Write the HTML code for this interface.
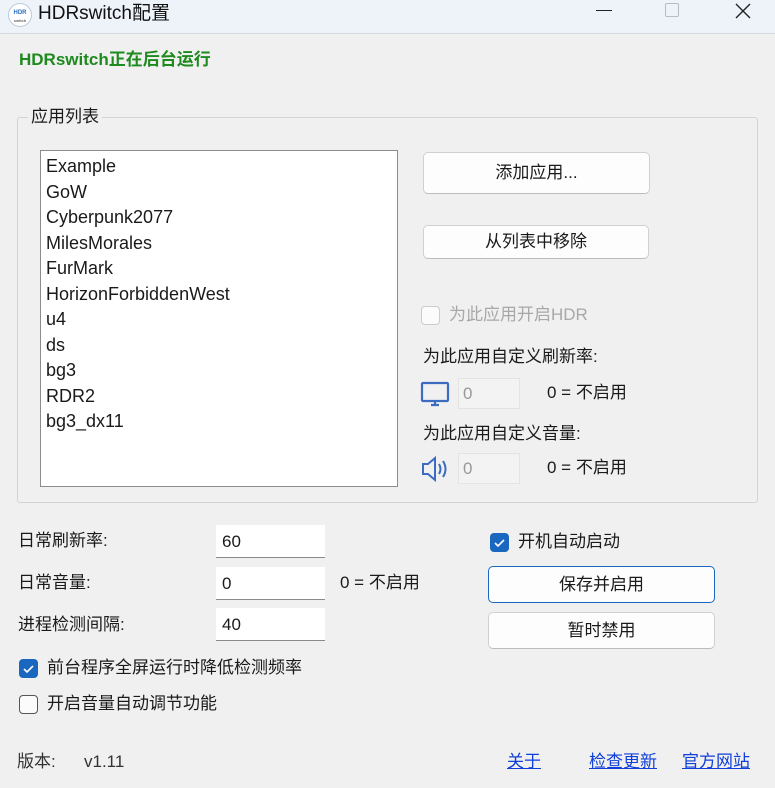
<!DOCTYPE html>
<html><head><meta charset="utf-8"><style>
*{margin:0;padding:0;box-sizing:border-box}
body{width:775px;height:788px;background:#f0f0f0;font-family:"Liberation Sans","Noto Sans CJK SC",sans-serif;color:#1a1a1a;position:relative;overflow:hidden;font-size:17px}
.a{position:absolute;white-space:nowrap;line-height:20px}
.btn{position:absolute;background:#fdfdfd;border:1px solid #d0d0d0;border-bottom-color:#bcbcbc;border-radius:5px;text-align:center;font-size:17px}
.inp{position:absolute;background:#fff;border-bottom:1px solid #8a8a8a;font-size:17px;padding-left:6px}
.cb{position:absolute;width:19px;height:19px;border-radius:4px}
.cb.on{background:#1a67c0}
.cb.off{border:1.5px solid #555;background:#fbfbfb}
.lnk{color:#0f3fd8;text-decoration:underline}
</style></head><body>
<div class="a" style="left:0;top:0;width:775px;height:34px;background:#eef2f9;border-bottom:1px solid #d6d9de"></div>
<div class="a" style="left:8px;top:3px;width:24px;height:24px;border-radius:50%;background:#fff;border:1px solid #bcd;font-size:6px;color:#2a6cc0;text-align:center;line-height:8px;padding-top:5px;font-weight:bold">HDR<br><span style="font-size:4px;color:#666">switch</span></div>
<div class="a" style="left:38px;top:3px;font-size:19px;line-height:22px;color:#111">HDRswitch配置</div>
<div class="a" style="left:596px;top:10px;width:16px;height:1px;background:#222"></div>
<div class="a" style="left:665px;top:3px;width:14px;height:14px;border:1px solid #bbb;border-radius:2px"></div>
<svg class="a" style="left:734px;top:2px" width="18" height="18"><path d="M2 2L16 16M16 2L2 16" stroke="#222" stroke-width="1.4"/></svg>
<div class="a" style="left:19px;top:50px;font-size:17px;font-weight:bold;color:#1e8a1e">HDRswitch正在后台运行</div>
<div class="a" style="left:17px;top:117px;width:741px;height:386px;border:1px solid #d4d4d4;border-radius:3px"></div>
<div class="a" style="left:28px;top:107px;padding:0 3px;background:#f0f0f0;font-size:17px">应用列表</div>
<div class="a" style="left:40px;top:150px;width:358px;height:337px;background:#fff;border:1px solid #8c8c8c;padding:3px 0 0 5px;font-size:18px;line-height:25.5px">
Example<br>GoW<br>Cyberpunk2077<br>MilesMorales<br>FurMark<br>HorizonForbiddenWest<br>u4<br>ds<br>bg3<br>RDR2<br>bg3_dx11</div>
<div class="btn" style="left:423px;top:152px;width:227px;height:42px;line-height:40px">添加应用...</div>
<div class="btn" style="left:423px;top:225px;width:226px;height:34px;line-height:32px">从列表中移除</div>
<div class="cb off" style="left:421px;top:306px;border-color:#ccc"></div>
<div class="a" style="left:449px;top:305px;color:#a8a8a8">为此应用开启HDR</div>
<div class="a" style="left:423px;top:347px">为此应用自定义刷新率:</div>
<svg class="a" style="left:420px;top:381px" width="32" height="28"><rect x="2" y="2" width="26" height="18" rx="1" fill="none" stroke="#3b6cc2" stroke-width="2.2"/><path d="M11 24h8M15 20v4" stroke="#3b6cc2" stroke-width="2.2"/></svg>
<div class="a" style="left:458px;top:378px;width:62px;height:31px;background:#f3f3f3;border:1px solid #e3e3e3;color:#999;padding:5px 0 0 4px">0</div>
<div class="a" style="left:547px;top:383px">0 = 不启用</div>
<div class="a" style="left:423px;top:424px">为此应用自定义音量:</div>
<svg class="a" style="left:420px;top:454px" width="30" height="30"><path d="M3 10h5l7-6v22l-7-6H3z" fill="none" stroke="#3b6cc2" stroke-width="2"/><path d="M19 10q3 5 0 10M23 7q5 8 0 16" fill="none" stroke="#3b6cc2" stroke-width="2"/></svg>
<div class="a" style="left:458px;top:453px;width:62px;height:31px;background:#f3f3f3;border:1px solid #e3e3e3;color:#999;padding:5px 0 0 4px">0</div>
<div class="a" style="left:547px;top:458px">0 = 不启用</div>
<div class="a" style="left:18px;top:531px">日常刷新率:</div>
<div class="a" style="left:18px;top:573px">日常音量:</div>
<div class="a" style="left:18px;top:615px">进程检测间隔:</div>
<div class="inp" style="left:216px;top:525px;width:109px;height:33px;line-height:33px">60</div>
<div class="inp" style="left:216px;top:567px;width:109px;height:33px;line-height:33px">0</div>
<div class="inp" style="left:216px;top:608px;width:109px;height:33px;line-height:33px">40</div>
<div class="a" style="left:340px;top:573px">0 = 不启用</div>
<div class="cb on" style="left:490px;top:533px"><svg width="19" height="19"><path d="M5 10l3 3 6-6" fill="none" stroke="#fff" stroke-width="1.6"/></svg></div>
<div class="a" style="left:518px;top:532px">开机自动启动</div>
<div class="btn" style="left:488px;top:566px;width:227px;height:37px;line-height:35px;border:1.5px solid #1a67c0">保存并启用</div>
<div class="btn" style="left:488px;top:612px;width:227px;height:37px;line-height:35px">暂时禁用</div>
<div class="cb on" style="left:19px;top:659px"><svg width="19" height="19"><path d="M5 10l3 3 6-6" fill="none" stroke="#fff" stroke-width="1.6"/></svg></div>
<div class="a" style="left:47px;top:658px">前台程序全屏运行时降低检测频率</div>
<div class="cb off" style="left:19px;top:695px"></div>
<div class="a" style="left:47px;top:694px">开启音量自动调节功能</div>
<div class="a" style="left:17px;top:752px;color:#333">版本:</div>
<div class="a" style="left:84px;top:752px;color:#333">v1.11</div>
<div class="a lnk" style="left:507px;top:752px">关于</div>
<div class="a lnk" style="left:589px;top:752px">检查更新</div>
<div class="a lnk" style="left:682px;top:752px">官方网站</div>
</body></html>
